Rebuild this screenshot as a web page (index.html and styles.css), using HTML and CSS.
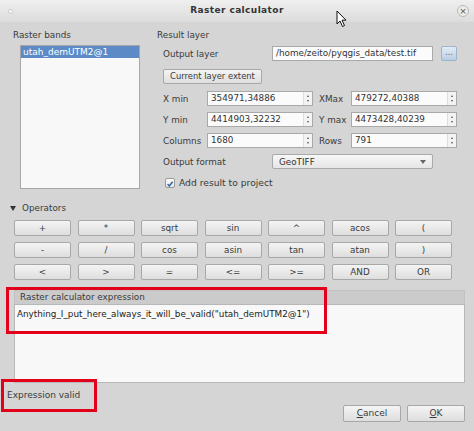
FILE: index.html
```html
<!DOCTYPE html>
<html>
<head>
<meta charset="utf-8">
<link rel="stylesheet" href="styles.css">
</head>
<body>
<div class="window">
  <div class="titlebar">
    <div class="tb-left"><span class="tb-dot"></span></div>
    <div class="tb-title">Raster calculator</div>
    <div class="tb-right"><span class="tb-close">×</span></div>
  </div>

  <div class="top">
    <div class="bands">
      <div class="lbl">Raster bands</div>
      <div class="list">
        <div class="list-item sel">utah_demUTM2@1</div>
      </div>
    </div>
    <div class="result">
      <div class="lbl">Result layer</div>
      <div class="row-output">
        <span class="rlbl">Output layer</span>
        <span class="input wide">/home/zeito/pyqgis_data/test.tif</span>
        <span class="dots">...</span>
      </div>
      <div class="btn extent">Current layer extent</div>
      <div class="spins">
        <div class="spin-row">
          <span class="slbl">X min</span>
          <span class="spin"><span class="sval">354971,34886</span><span class="arrows"><i class="up"></i><i class="dn"></i></span></span>
          <span class="slbl2">XMax</span>
          <span class="spin"><span class="sval">479272,40388</span><span class="arrows"><i class="up"></i><i class="dn"></i></span></span>
        </div>
        <div class="spin-row">
          <span class="slbl">Y min</span>
          <span class="spin"><span class="sval">4414903,32232</span><span class="arrows"><i class="up"></i><i class="dn"></i></span></span>
          <span class="slbl2">Y max</span>
          <span class="spin"><span class="sval">4473428,40239</span><span class="arrows"><i class="up"></i><i class="dn"></i></span></span>
        </div>
        <div class="spin-row">
          <span class="slbl">Columns</span>
          <span class="spin"><span class="sval">1680</span><span class="arrows"><i class="up"></i><i class="dn"></i></span></span>
          <span class="slbl2">Rows</span>
          <span class="spin"><span class="sval">791</span><span class="arrows"><i class="up"></i><i class="dn"></i></span></span>
        </div>
      </div>
      <div class="row-format">
        <span class="rlbl">Output format</span>
        <span class="combo"><span>GeoTIFF</span><span class="caret"></span></span>
      </div>
      <div class="row-check">
        <span class="check"><svg width="10" height="10" viewBox="0 0 10 10"><path d="M2 5.2 L4.2 7.5 L8.3 2.2" fill="none" stroke="#2c5f9e" stroke-width="1.8"/></svg></span>
        <span>Add result to project</span>
      </div>
    </div>
  </div>

  <div class="ops-head"><span class="tri"></span><span>Operators</span></div>
  <div class="ops">
    <div class="btn">+</div><div class="btn">*</div><div class="btn">sqrt</div><div class="btn">sin</div><div class="btn">^</div><div class="btn">acos</div><div class="btn">(</div>
    <div class="btn">-</div><div class="btn">/</div><div class="btn">cos</div><div class="btn">asin</div><div class="btn">tan</div><div class="btn">atan</div><div class="btn">)</div>
    <div class="btn">&lt;</div><div class="btn">&gt;</div><div class="btn">=</div><div class="btn">&lt;=</div><div class="btn">&gt;=</div><div class="btn">AND</div><div class="btn">OR</div>
  </div>

  <div class="expr">
    <div class="expr-head">Raster calculator expression</div>
    <div class="expr-text">Anything_I_put_here_always_it_will_be_valid("utah_demUTM2@1")</div>
  </div>

  <div class="status">Expression valid</div>
  <div class="actions">
    <div class="btn act"><u>C</u>ancel</div>
    <div class="btn act"><u>O</u>K</div>
  </div>

  <div class="mark mark-expr"></div>
  <div class="mark mark-valid"></div>
  <svg class="cursor" width="12" height="18" viewBox="0 0 12 18"><path d="M1 1 L1 14 L4 11 L6.5 16.5 L8.5 15.5 L6 10.2 L10 10.2 Z" fill="#fff" stroke="#111" stroke-width="1"/></svg>
</div>
</body>
</html>
```
FILE: styles.css
```css
* { box-sizing: border-box; }
html, body { margin: 0; padding: 0; }
body { background: #d4d4d4; }
.window {
  position: relative;
  width: 474px;
  height: 431px;
  overflow: hidden;
  background: #d5d5d5;
  font-family: "DejaVu Sans", sans-serif;
  font-size: 8.8px;
  color: #3a3a3a;
}
.titlebar {
  height: 22px;
  display: grid;
  grid-template-columns: 1fr auto 1fr;
  align-items: center;
  background: linear-gradient(#efefef, #dcdcdc);
}
.tb-left { padding-left: 8px; display: flex; align-items: center; }
.tb-dot { width: 5px; height: 5px; border-radius: 50%; background: #fafafa; border: 1px solid #c8c8c8; }
.tb-title { font-weight: bold; font-size: 9px; color: #333; letter-spacing: 0.4px; margin-top: -2px; }
.tb-right { display: flex; justify-content: flex-end; padding-right: 5px; }
.tb-close {
  width: 12px; height: 12px; border-radius: 50%;
  border: 1px solid #b8b8b8; background: #ececec;
  font-size: 9px; line-height: 10px; text-align: center; color: #555;
}

.top { display: flex; height: 176px; }
.bands { width: 149px; padding-left: 13px; }
.lbl { margin-top: 7px; height: 12px; line-height: 12px; }
.list {
  margin-top: 4px; margin-left: 7px;
  width: 120px; height: 144px;
  background: #f8f8f8; border: 1px solid #a7a7a7;
}
.list-item { height: 12px; line-height: 12px; padding-left: 2px; font-size: 9px; }
.list-item.sel { background: #5b8ac6; color: #fff; }

.result { flex: 1; padding-left: 8px; }
.row-output { display: flex; align-items: center; margin-top: 5px; height: 15px; padding-left: 6px; }
.rlbl { width: 109px; }
.input {
  height: 15px; line-height: 13px; padding-left: 3px;
  background: #fbfbfb; border: 1px solid #a9a9a9; color: #333;
}
.input.wide { width: 161px; }
.dots {
  margin-left: 8px; width: 16px; height: 15px; line-height: 11px; text-align: center;
  border: 1px solid #9fb3c9; border-radius: 2px;
  background: linear-gradient(#e2ecf6, #b9cde2); color: #4a6a90; font-size: 8px;
}
.btn {
  height: 16px; line-height: 14px; text-align: center;
  border: 1px solid #a8a8a8; border-radius: 2px;
  background: linear-gradient(#f4f4f4, #dedede);
  color: #3a3a3a;
}
.extent { margin-top: 8px; margin-left: 6px; width: 99px; height: 15px; line-height: 13px; font-size: 8.4px; }

.spins { margin-top: 7px; display: flex; flex-direction: column; gap: 6px; padding-left: 6px; }
.spin-row { display: flex; align-items: center; height: 15px; }
.slbl { width: 44px; }
.slbl2 { width: 38px; padding-left: 6px; }
.spin {
  width: 106px; height: 15px; display: flex;
  background: #fbfbfb; border: 1px solid #a9a9a9;
}
.sval { flex: 1; line-height: 13px; padding-left: 3px; color: #333; }
.arrows {
  width: 9px; display: flex; flex-direction: column; justify-content: center; align-items: center; gap: 3px;
  border-left: 1px solid #dedede; background: #f3f3f3;
}
.arrows i { display: block; width: 0; height: 0; border-left: 1.5px solid transparent; border-right: 1.5px solid transparent; }
.arrows .up { border-bottom: 2px solid #555; }
.arrows .dn { border-top: 2px solid #555; }

.row-format { display: flex; align-items: center; margin-top: 6px; height: 15px; padding-left: 6px; }
.combo {
  width: 161px; height: 15px; display: flex; align-items: center; justify-content: space-between;
  padding: 0 6px 0 6px; border: 1px solid #a9a9a9; border-radius: 2px;
  background: linear-gradient(#f7f7f7, #e6e6e6); color: #333;
}
.caret { width: 0; height: 0; border-left: 3px solid transparent; border-right: 3px solid transparent; border-top: 4px solid #666; }
.row-check { display: flex; align-items: center; gap: 4px; margin-top: 8px; margin-left: 8px; height: 11px; font-size: 9.2px; }
.check {
  width: 10px; height: 10px; display: flex; border: 1px solid #9a9a9a; border-radius: 2px;
  background: linear-gradient(#fdfdfd, #e4e4e4);
}
.check svg { display: block; }

.ops-head { display: flex; align-items: center; gap: 6px; margin-top: 4px; height: 12px; padding-left: 10px; }
.tri { width: 0; height: 0; border-left: 3.5px solid transparent; border-right: 3.5px solid transparent; border-top: 5px solid #333; }
.ops {
  display: grid; grid-template-columns: repeat(7, 57px); grid-auto-rows: 16px;
  column-gap: 6.5px; row-gap: 6px;
  margin-top: 6px; padding-left: 14px;
}

.expr { margin-top: 10px; margin-left: 14px; width: 451px; }
.expr-head {
  height: 14px; line-height: 13px; padding-left: 5px;
  background: #cbcbcb; border: 1px solid #c2c2c2; border-bottom: none; color: #3a3a3a;
}
.expr-text {
  height: 79px; padding: 4px 2px; line-height: 10px;
  background: #f8f8f8; border: 1px solid #b7b7b7; color: #222; font-size: 8.8px;
}

.status { margin-top: 6px; height: 12px; line-height: 12px; padding-left: 7px; font-size: 9px; }
.actions { display: flex; justify-content: flex-end; gap: 6px; margin-top: 4px; padding-right: 9px; }
.act { width: 58px; height: 17px; line-height: 15px; font-size: 9px; }

.mark { position: absolute; border: 3px solid #e2001a; }
.mark-expr { left: 6px; top: 287px; width: 321px; height: 47px; }
.mark-valid { left: 1px; top: 379px; width: 96px; height: 33px; }
.cursor { position: absolute; left: 336px; top: 10px; }
```
